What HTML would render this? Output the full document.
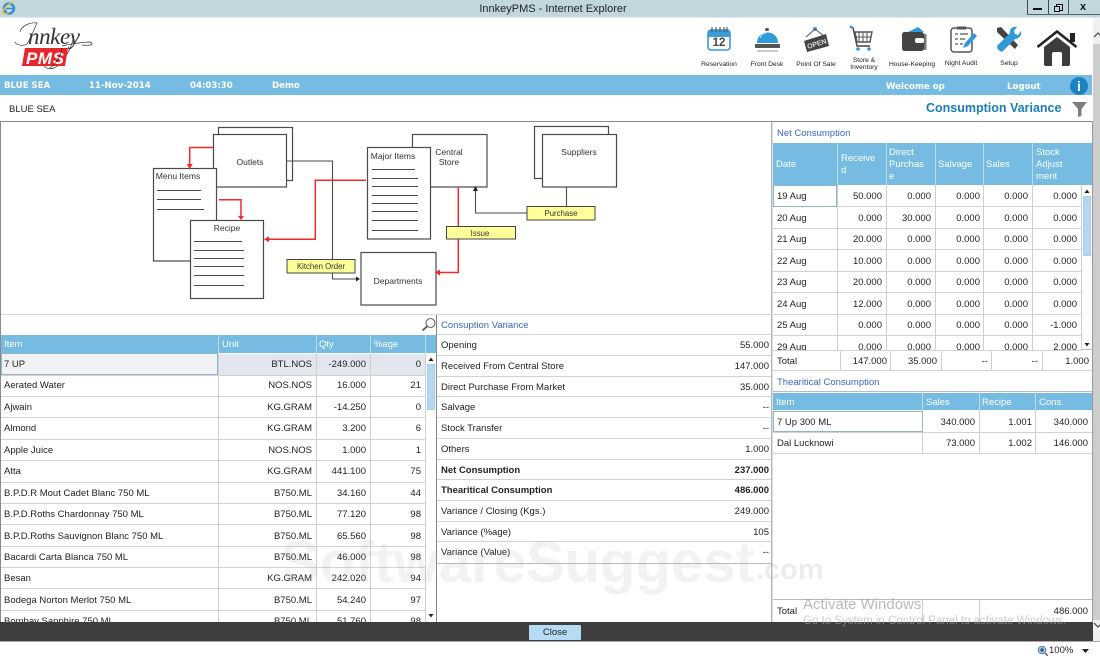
<!DOCTYPE html>
<html><head><meta charset="utf-8"><title>InnkeyPMS</title>
<style>
html,body{margin:0;padding:0;background:#fff}
#p{position:relative;width:1100px;height:659px;overflow:hidden;background:#fff;font-family:"Liberation Sans",sans-serif;font-size:9.5px;color:#222}
#p div{position:absolute;box-sizing:border-box;white-space:nowrap}
.l{height:1px;background:#d2d2d2}
.v{width:1px;background:#cfcfcf}
.h{color:#fff;line-height:18px;margin-top:1px}
.t{line-height:14px;height:14px;margin-top:1px}
.a{text-align:right}
.bl{color:#3a67c0}
.bb{font-family:"DejaVu Sans",sans-serif;font-weight:bold;font-size:8.6px;color:#fff;line-height:12px}
.ic{font-size:6.7px;color:#222;text-align:center;line-height:7px}
</style></head><body><div id="p">

<!-- title bar -->
<div style="left:0;top:0;width:1100px;height:17px;background:#c2d6de"></div>
<div style="left:0;top:17px;width:1100px;height:1px;background:#dfe9ed"></div>
<svg style="position:absolute;left:1px;top:1px" width="15" height="15" viewBox="0 0 15 15"><ellipse cx="8" cy="7.500" rx="5" ry="5" fill="none" stroke="#2d8fd8" stroke-width="2.400"/><path d="M5 7.500h7" stroke="#2d8fd8" stroke-width="1.500"/><path d="M13 1.500C9 1 2 7 1.500 12c0 2 4 1 7-1" fill="none" stroke="#f2c230" stroke-width="1.300"/></svg>
<div style="left:400px;top:2px;width:306px;text-align:center;font-size:11px;line-height:14px;color:#222">InnkeyPMS - Internet Explorer</div>
<div style="left:1027px;top:0;width:1px;height:15px;background:#445"></div>
<div style="left:1048px;top:0;width:1px;height:15px;background:#445"></div>
<div style="left:1068px;top:0;width:1px;height:15px;background:#556"></div>
<div style="left:1027px;top:14px;width:73px;height:1px;background:#55656d"></div>
<div style="left:1033px;top:8px;width:9px;height:2px;background:#111"></div>
<div style="left:1056px;top:4px;width:7px;height:7px;border:1.500px solid #111"></div>
<div style="left:1054px;top:6px;width:6px;height:6px;border:1.500px solid #111;background:#c2d6de"></div>
<div style="left:1080px;top:1px;width:14px;font-size:11px;font-weight:bold;line-height:13px;color:#111">x</div>

<!-- logo -->
<svg style="position:absolute;left:12px;top:18px" width="86" height="56" viewBox="0 0 86 56">
<path d="M3 24C5 28 12 28 15 26 20 18 23 9 25 5 18 4 9 8 8 14" fill="none" stroke="#333" stroke-width=".7"/>
<text x="16" y="26" font-family="Liberation Serif" font-style="italic" font-size="23" fill="#333" textLength="52">nnkey</text>
<path d="M62 18C60 28 52 46 42 50 34 52 30 48 34 45" fill="none" stroke="#333" stroke-width=".7"/>
<path d="M50 28C58 26 72 24 78 24 82 26 80 28 70 27" fill="none" stroke="#333" stroke-width=".7"/>
<path d="M13 30L10 48H53L56 30Z" fill="#e6262c"/>
<text x="14" y="46" font-family="Liberation Sans" font-weight="bold" font-style="italic" font-size="17" fill="#fff" textLength="38">PMS</text>
<path d="M50 30C49 38 44 46 38 50" fill="none" stroke="#222" stroke-width=".6"/>
</svg>

<!-- top icons -->
<svg style="position:absolute;left:700px;top:22px" width="380" height="46" viewBox="700 22 380 46">
<!-- calendar -->
<rect x="708" y="30" width="22" height="20" rx="3" fill="#fff" stroke="#3b9bd7" stroke-width="1.600"/>
<path d="M708 33q0-3 3-3h16q3 0 3 3v4h-22z" fill="#3b9bd7"/>
<path d="M712 27v5M716 27v5M720 27v5M724 27v5M727 27v5" stroke="#444" stroke-width="1"/>
<text x="719" y="46" text-anchor="middle" font-family="Liberation Sans" font-weight="bold" font-size="11.500" fill="#444">12</text>
<!-- bell -->
<path d="M757 43c0-14 21-14 21 0z" fill="#2f9ada"/>
<rect x="755" y="44" width="25" height="4" fill="#555"/>
<rect x="765" y="28" width="4" height="3" rx="1.500" fill="#555"/>
<path d="M760 38c1-3 3-5 6-5" stroke="#bfe2f6" fill="none"/>
<path d="M757 51h21" stroke="#ccc" stroke-width="2"/>
<!-- open -->
<circle cx="815" cy="29" r="2" fill="#3b9bd7"/>
<path d="M815 29l-9 8M815 29l9 7" stroke="#555" fill="none"/>
<path d="M804 41l22-7 3 12-22 6z" fill="#444"/>
<text transform="translate(808 49) rotate(-17)" font-family="Liberation Sans" font-weight="bold" font-size="7" fill="#ddd">OPEN</text>
<!-- cart -->
<path d="M850 27l3 1 4 18h13" stroke="#444" stroke-width="1.400" fill="none"/>
<path d="M855 32h17l-2 10h-13z" fill="#fff" stroke="#555" stroke-width="1.400"/>
<path d="M859 32v10M863 32v10M867 32v10M856 37h15" stroke="#555"/>
<circle cx="858" cy="49" r="1.800" fill="#2f9ada"/><circle cx="869" cy="49" r="1.800" fill="#2f9ada"/>
<path d="M850 26l3 2" stroke="#2f9ada" stroke-width="2"/>
<!-- wallet -->
<path d="M908 32l10-5 6 5z" fill="#2f9ada"/>
<rect x="902" y="32" width="22" height="19" rx="2.500" fill="#444"/>
<path d="M924 34h1.500q1 0 1 1v14q0 1-1 1h-1.500z" fill="#777"/>
<rect x="915" y="38" width="9" height="5" rx="2" fill="#fff"/>
<!-- audit -->
<rect x="951" y="28" width="21" height="24" rx="3" fill="#fff" stroke="#555" stroke-width="1.500"/>
<rect x="957" y="26.500" width="9" height="3" fill="#555"/>
<path d="M955 34h3M955 39h3M955 44h3M960 34h8M960 39h5M960 44h3" stroke="#555" stroke-width="1.300"/>
<path d="M963 48l2-5 9-10 3 3-9 10z" fill="#2f9ada"/>
<!-- setup -->
<path d="M997 28l4-1 17 18-3 4-18-17z" fill="#444"/>
<path d="M999 50c-3-2-2-5 0-6l11-11c-1-4 3-7 7-6l-3 4 1 3 3 1 3-4c1 4-2 8-6 8l-12 12c-1 1-3 1-4-1z" fill="#2f9ada"/>
<!-- home -->
<path d="M1037.500 47L1057 31.500 1076.500 47" fill="none" stroke="#222" stroke-width="2.500"/>
<rect x="1070" y="33" width="5" height="9" fill="#222"/>
<path d="M1044 47l13-10 13 10v17q0 2-2 2h-6v-12q0-2-2-2h-6q-2 0-2 2v12h-6q-2 0-2-2z" fill="#3c3c3c"/>
</svg>
<div class="ic" style="left:690px;top:61px;width:58px">Reservation</div>
<div class="ic" style="left:738px;top:61px;width:58px">Front Desk</div>
<div class="ic" style="left:787px;top:61px;width:58px">Point Of Sale</div>
<div class="ic" style="left:835px;top:57px;width:58px">Store &amp;<br>Inventory</div>
<div class="ic" style="left:883px;top:61px;width:58px">House-Keeping</div>
<div class="ic" style="left:932px;top:60px;width:58px">Night Audit</div>
<div class="ic" style="left:980px;top:60px;width:58px">Setup</div>

<!-- blue bar -->
<div style="left:0;top:75px;width:1092px;height:20px;background:#75bbe2"></div>
<div class="bb" style="left:4px;top:80px">BLUE SEA</div>
<div class="bb" style="left:89px;top:80px">11-Nov-2014</div>
<div class="bb" style="left:190px;top:80px">04:03:30</div>
<div class="bb" style="left:272px;top:80px">Demo</div>
<div class="bb" style="left:886px;top:81px">Welcome op</div>
<div class="bb" style="left:1007px;top:81px">Logout</div>
<div style="left:1070px;top:77px;width:18px;height:18px;border-radius:9px;background:#1b84c0;color:#fff;text-align:center;font:bold 14px/18px 'Liberation Sans',sans-serif">i</div>

<div style="left:9px;top:104px;font-size:9.500px;line-height:12px;color:#222">BLUE SEA</div>
<div style="left:926px;top:100px;font-size:12.500px;font-weight:bold;line-height:16px;color:#1a7db5">Consumption Variance</div>
<svg style="position:absolute;left:1072px;top:102px" width="16" height="15"><path d="M0 0H15L9.500 7V14L6 15V7Z" fill="#7d7d7d"/></svg>

<!-- right scrollbar -->
<div style="left:1093px;top:18px;width:7px;height:623px;background:#f0f0f0"></div>
<div style="left:1093px;top:44px;width:7px;height:576px;background:#cdcdcd"></div>
<svg style="position:absolute;left:1093px;top:30px" width="7" height="10"><path d="M1 7L5 3 7 5" fill="none" stroke="#555" stroke-width="1.300"/></svg>
<svg style="position:absolute;left:1093px;top:621px" width="7" height="10"><path d="M1 2L5 6 7 4" fill="none" stroke="#555" stroke-width="1.300"/></svg>

<!-- panel frame -->
<div style="left:0;top:121px;width:1092px;height:1px;background:#8a8a8a"></div>
<div style="left:0;top:121px;width:1px;height:501px;background:#8a8a8a"></div>
<div style="left:1092px;top:121px;width:1px;height:501px;background:#999"></div>
<div style="left:771px;top:122px;width:1px;height:500px;background:#b5b5b5"></div>
<div style="left:772px;top:122px;width:1px;height:500px;background:#ddd"></div>

<!-- diagram -->
<svg style="position:absolute;left:0;top:0" width="780" height="320" viewBox="0 0 780 320">
<g fill="#fff" stroke="#4a4a4a" stroke-width="1.200">
<rect x="218.500" y="127.500" width="74" height="53"/>
<rect x="213.500" y="134.500" width="73" height="52.500"/>
<rect x="153.500" y="168.500" width="63" height="92.500"/>
<rect x="190.500" y="220.500" width="73" height="78"/>
<rect x="412.500" y="134.500" width="74.500" height="52.500"/>
<rect x="367.500" y="147.500" width="63" height="91.500"/>
<rect x="534.500" y="126.500" width="74" height="52"/>
<rect x="542.500" y="134.500" width="74" height="52.500"/>
<rect x="361" y="252.500" width="75" height="52.500"/>
</g>
<g fill="none" stroke="#4a4a4a" stroke-width="1.100">
<path d="M287 161H332.500V279H356"/>
<path d="M566.500 187V206"/>
<path d="M527 213H475.500V191"/>
<path d="M157 190.500H201M157 199.500H201M157 209.500H204"/>
<path d="M194 241.500H242M194 250.500H244M194 258.500H244M194 266.500H244M194 275.500H244M194 285.500H244"/>
<path d="M372 169.500H415M372 178.500H418M372 186.500H418M372 195.500H418M372 203.500H418M372 211.500H418M372 220.500H418M372 230.500H418"/>
</g>
<g fill="none" stroke="#ee2a2a" stroke-width="1.500">
<path d="M213 147.500H189.700V164"/>
<path d="M219 199.700H241V216"/>
<path d="M366 180.300H315.300V239.300H268"/>
<path d="M458.300 187V272.500H440"/>
</g>
<path d="M186.700 164h6l-3 5zM238 216h6l-3 4zM269 236.300v6l-5-3zM440 269.500v6l-5-3z" fill="#ee2a2a"/>
<path d="M356 276.500v5l4-2.500zM473 191h5l-2.500-5z" fill="#222"/>
<g fill="#ffff99" stroke="#444" stroke-width="1">
<rect x="287" y="259.500" width="68" height="13.500"/>
<rect x="446.500" y="226.500" width="69" height="12.500"/>
<rect x="527" y="206.500" width="68" height="13.500"/>
</g>
<g font-family="Liberation Sans" font-size="8.500" fill="#333" text-anchor="middle">
<text x="250" y="165">Outlets</text>
<text x="178" y="179">Menu Items</text>
<text x="227" y="231">Recipe</text>
<text x="393" y="159">Major Items</text>
<text x="449" y="155">Central</text>
<text x="449" y="165">Store</text>
<text x="579" y="155">Suppliers</text>
<text x="398" y="284">Departments</text>
<text x="321" y="269" font-size="7.800">Kitchen Order</text>
<text x="480" y="236" font-size="7.800">Issue</text>
<text x="561" y="216" font-size="7.800">Purchase</text>
</g>
</svg>

<!-- search row -->
<div style="left:1px;top:314px;width:771px;height:1px;background:#d5d5d5"></div>
<svg style="position:absolute;left:421px;top:317px" width="16" height="15"><circle cx="9.500" cy="6" r="4.500" fill="none" stroke="#666" stroke-width="1.100"/><path d="M6 9.500L1.500 13.500" stroke="#555" stroke-width="1.800"/></svg>

<!-- left table -->
<div style="left:1px;top:335px;width:436px;height:18px;background:#75bbe2"></div>
<div class="h" style="left:4px;top:335px">Item</div>
<div class="h" style="left:222px;top:335px">Unit</div>
<div class="h" style="left:319px;top:335px">Qty</div>
<div class="h" style="left:374px;top:335px">%age</div>
<div style="left:218px;top:335px;width:1px;height:18px;background:#bcdcf0"></div>
<div style="left:316px;top:335px;width:1px;height:18px;background:#bcdcf0"></div>
<div style="left:370px;top:335px;width:1px;height:18px;background:#bcdcf0"></div>
<div style="left:425px;top:335px;width:1px;height:18px;background:#bcdcf0"></div>

<div style="left:219px;top:354px;width:207px;height:21px;background:#e1e6ef"></div>
<div style="left:1px;top:353px;width:217px;height:22px;background:#f1f2f3;border:1px solid #8db6c9"></div>

<div class="v" style="left:218px;top:353px;height:269px"></div>
<div class="v" style="left:316px;top:353px;height:269px"></div>
<div class="v" style="left:370px;top:353px;height:269px"></div>
<div class="v" style="left:425px;top:353px;height:269px"></div>
<div class="v" style="left:436px;top:315px;height:307px;background:#888"></div>

<div class="l" style="left:1px;top:375px;width:425px"></div><div class="l" style="left:1px;top:396px;width:425px"></div><div class="l" style="left:1px;top:417px;width:425px"></div><div class="l" style="left:1px;top:439px;width:425px"></div><div class="l" style="left:1px;top:460px;width:425px"></div><div class="l" style="left:1px;top:482px;width:425px"></div><div class="l" style="left:1px;top:503px;width:425px"></div><div class="l" style="left:1px;top:524px;width:425px"></div><div class="l" style="left:1px;top:546px;width:425px"></div><div class="l" style="left:1px;top:567px;width:425px"></div><div class="l" style="left:1px;top:588px;width:425px"></div><div class="l" style="left:1px;top:610px;width:425px"></div>

<div class="t" style="left:4px;top:357px">7 UP</div><div class="t a" style="left:219px;width:93px;top:357px">BTL.NOS</div><div class="t a" style="left:317px;width:49px;top:357px">-249.000</div><div class="t a" style="left:371px;width:50px;top:357px">0</div>
<div class="t" style="left:4px;top:378px">Aerated Water</div><div class="t a" style="left:219px;width:93px;top:378px">NOS.NOS</div><div class="t a" style="left:317px;width:49px;top:378px">16.000</div><div class="t a" style="left:371px;width:50px;top:378px">21</div>
<div class="t" style="left:4px;top:400px">Ajwain</div><div class="t a" style="left:219px;width:93px;top:400px">KG.GRAM</div><div class="t a" style="left:317px;width:49px;top:400px">-14.250</div><div class="t a" style="left:371px;width:50px;top:400px">0</div>
<div class="t" style="left:4px;top:421px">Almond</div><div class="t a" style="left:219px;width:93px;top:421px">KG.GRAM</div><div class="t a" style="left:317px;width:49px;top:421px">3.200</div><div class="t a" style="left:371px;width:50px;top:421px">6</div>
<div class="t" style="left:4px;top:443px">Apple Juice</div><div class="t a" style="left:219px;width:93px;top:443px">NOS.NOS</div><div class="t a" style="left:317px;width:49px;top:443px">1.000</div><div class="t a" style="left:371px;width:50px;top:443px">1</div>
<div class="t" style="left:4px;top:464px">Atta</div><div class="t a" style="left:219px;width:93px;top:464px">KG.GRAM</div><div class="t a" style="left:317px;width:49px;top:464px">441.100</div><div class="t a" style="left:371px;width:50px;top:464px">75</div>
<div class="t" style="left:4px;top:486px">B.P.D.R Mout Cadet Blanc 750 ML</div><div class="t a" style="left:219px;width:93px;top:486px">B750.ML</div><div class="t a" style="left:317px;width:49px;top:486px">34.160</div><div class="t a" style="left:371px;width:50px;top:486px">44</div>
<div class="t" style="left:4px;top:507px">B.P.D.Roths Chardonnay 750 ML</div><div class="t a" style="left:219px;width:93px;top:507px">B750.ML</div><div class="t a" style="left:317px;width:49px;top:507px">77.120</div><div class="t a" style="left:371px;width:50px;top:507px">98</div>
<div class="t" style="left:4px;top:529px">B.P.D.Roths Sauvignon Blanc 750 ML</div><div class="t a" style="left:219px;width:93px;top:529px">B750.ML</div><div class="t a" style="left:317px;width:49px;top:529px">65.560</div><div class="t a" style="left:371px;width:50px;top:529px">98</div>
<div class="t" style="left:4px;top:550px">Bacardi Carta Blanca 750 ML</div><div class="t a" style="left:219px;width:93px;top:550px">B750.ML</div><div class="t a" style="left:317px;width:49px;top:550px">46.000</div><div class="t a" style="left:371px;width:50px;top:550px">98</div>
<div class="t" style="left:4px;top:571px">Besan</div><div class="t a" style="left:219px;width:93px;top:571px">KG.GRAM</div><div class="t a" style="left:317px;width:49px;top:571px">242.020</div><div class="t a" style="left:371px;width:50px;top:571px">94</div>
<div class="t" style="left:4px;top:593px">Bodega Norton Merlot 750 ML</div><div class="t a" style="left:219px;width:93px;top:593px">B750.ML</div><div class="t a" style="left:317px;width:49px;top:593px">54.240</div><div class="t a" style="left:371px;width:50px;top:593px">97</div>
<div class="t" style="left:4px;top:614px">Bombay Sapphire 750 ML</div><div class="t a" style="left:219px;width:93px;top:614px">B750.ML</div><div class="t a" style="left:317px;width:49px;top:614px">51.760</div><div class="t a" style="left:371px;width:50px;top:614px">98</div>

<!-- left scrollbar -->
<div style="left:426px;top:353px;width:10px;height:269px;background:#fff"></div>
<div style="left:427px;top:364px;width:8px;height:46px;background:#b4d8ef;border:1px solid #a5cfe9"></div>
<svg style="position:absolute;left:426px;top:355px" width="10" height="267"><path d="M2.500 6L5 2.500 7.500 6zM2.500 259L5 262.500 7.500 259z" fill="#222"/></svg>

<!-- middle panel -->
<div class="t bl" style="left:441px;top:318px">Consuption Variance</div>
<div class="l" style="left:437px;top:334px;width:334px"></div><div class="l" style="left:437px;top:355px;width:334px"></div><div class="l" style="left:437px;top:376px;width:334px"></div><div class="l" style="left:437px;top:396px;width:334px"></div><div class="l" style="left:437px;top:417px;width:334px"></div><div class="l" style="left:437px;top:438px;width:334px"></div><div class="l" style="left:437px;top:459px;width:334px"></div><div class="l" style="left:437px;top:479px;width:334px"></div><div class="l" style="left:437px;top:500px;width:334px"></div><div class="l" style="left:437px;top:521px;width:334px"></div><div class="l" style="left:437px;top:541px;width:334px"></div><div class="l" style="left:437px;top:563px;width:334px;background:#bbb"></div>

<div class="t" style="left:441px;top:338px">Opening</div><div class="t a" style="left:640px;width:129px;top:338px">55.000</div>
<div class="t" style="left:441px;top:359px">Received From Central Store</div><div class="t a" style="left:640px;width:129px;top:359px">147.000</div>
<div class="t" style="left:441px;top:380px">Direct Purchase From Market</div><div class="t a" style="left:640px;width:129px;top:380px">35.000</div>
<div class="t" style="left:441px;top:400px">Salvage</div><div class="t a" style="left:640px;width:129px;top:400px">--</div>
<div class="t" style="left:441px;top:421px">Stock Transfer</div><div class="t a" style="left:640px;width:129px;top:421px">--</div>
<div class="t" style="left:441px;top:442px">Others</div><div class="t a" style="left:640px;width:129px;top:442px">1.000</div>
<div class="t" style="left:441px;top:463px;font-weight:bold">Net Consumption</div><div class="t a" style="left:640px;width:129px;top:463px;font-weight:bold">237.000</div>
<div class="t" style="left:441px;top:483px;font-weight:bold">Thearitical Consumption</div><div class="t a" style="left:640px;width:129px;top:483px;font-weight:bold">486.000</div>
<div class="t" style="left:441px;top:504px">Variance / Closing (Kgs.)</div><div class="t a" style="left:640px;width:129px;top:504px">249.000</div>
<div class="t" style="left:441px;top:525px">Variance (%age)</div><div class="t a" style="left:640px;width:129px;top:525px">105</div>
<div class="t" style="left:441px;top:545px">Variance (Value)</div><div class="t a" style="left:640px;width:129px;top:545px">--</div>

<!-- net consumption -->
<div class="t bl" style="left:777px;top:126px">Net Consumption</div>
<div style="left:773px;top:143px;width:319px;height:42px;background:#75bbe2"></div>
<div style="left:837px;top:143px;width:1px;height:42px;background:#bcdcf0"></div><div style="left:886px;top:143px;width:1px;height:42px;background:#bcdcf0"></div><div style="left:935px;top:143px;width:1px;height:42px;background:#bcdcf0"></div><div style="left:983px;top:143px;width:1px;height:42px;background:#bcdcf0"></div><div style="left:1032px;top:143px;width:1px;height:42px;background:#bcdcf0"></div>
<div class="h" style="left:776px;top:155px">Date</div>
<div class="h" style="left:841px;top:152px;line-height:12px">Receive<br>d</div>
<div class="h" style="left:889px;top:146px;line-height:12px">Direct<br>Purchas<br>e</div>
<div class="h" style="left:938px;top:155px">Salvage</div>
<div class="h" style="left:986px;top:155px">Sales</div>
<div class="h" style="left:1036px;top:146px;line-height:12px">Stock<br>Adjust<br>ment</div>

<div class="l" style="left:773px;top:206px;width:309px"></div><div class="l" style="left:773px;top:228px;width:309px"></div><div class="l" style="left:773px;top:249px;width:309px"></div><div class="l" style="left:773px;top:271px;width:309px"></div><div class="l" style="left:773px;top:292px;width:309px"></div><div class="l" style="left:773px;top:314px;width:309px"></div><div class="l" style="left:773px;top:335px;width:309px"></div>
<div class="v" style="left:837px;top:185px;height:165px"></div><div class="v" style="left:886px;top:185px;height:165px"></div><div class="v" style="left:935px;top:185px;height:165px"></div><div class="v" style="left:983px;top:185px;height:165px"></div><div class="v" style="left:1032px;top:185px;height:165px"></div><div class="v" style="left:1081px;top:185px;height:165px"></div>
<div style="left:773px;top:185px;width:64px;height:22px;border:1px solid #8db6c9"></div>

<div class="t" style="left:777px;top:189px">19 Aug</div><div class="t a" style="left:838px;width:44px;top:189px">50.000</div><div class="t a" style="left:887px;width:44px;top:189px">0.000</div><div class="t a" style="left:936px;width:44px;top:189px">0.000</div><div class="t a" style="left:984px;width:44px;top:189px">0.000</div><div class="t a" style="left:1033px;width:44px;top:189px">0.000</div>
<div class="t" style="left:777px;top:211px">20 Aug</div><div class="t a" style="left:838px;width:44px;top:211px">0.000</div><div class="t a" style="left:887px;width:44px;top:211px">30.000</div><div class="t a" style="left:936px;width:44px;top:211px">0.000</div><div class="t a" style="left:984px;width:44px;top:211px">0.000</div><div class="t a" style="left:1033px;width:44px;top:211px">0.000</div>
<div class="t" style="left:777px;top:232px">21 Aug</div><div class="t a" style="left:838px;width:44px;top:232px">20.000</div><div class="t a" style="left:887px;width:44px;top:232px">0.000</div><div class="t a" style="left:936px;width:44px;top:232px">0.000</div><div class="t a" style="left:984px;width:44px;top:232px">0.000</div><div class="t a" style="left:1033px;width:44px;top:232px">0.000</div>
<div class="t" style="left:777px;top:254px">22 Aug</div><div class="t a" style="left:838px;width:44px;top:254px">10.000</div><div class="t a" style="left:887px;width:44px;top:254px">0.000</div><div class="t a" style="left:936px;width:44px;top:254px">0.000</div><div class="t a" style="left:984px;width:44px;top:254px">0.000</div><div class="t a" style="left:1033px;width:44px;top:254px">0.000</div>
<div class="t" style="left:777px;top:275px">23 Aug</div><div class="t a" style="left:838px;width:44px;top:275px">20.000</div><div class="t a" style="left:887px;width:44px;top:275px">0.000</div><div class="t a" style="left:936px;width:44px;top:275px">0.000</div><div class="t a" style="left:984px;width:44px;top:275px">0.000</div><div class="t a" style="left:1033px;width:44px;top:275px">0.000</div>
<div class="t" style="left:777px;top:297px">24 Aug</div><div class="t a" style="left:838px;width:44px;top:297px">12.000</div><div class="t a" style="left:887px;width:44px;top:297px">0.000</div><div class="t a" style="left:936px;width:44px;top:297px">0.000</div><div class="t a" style="left:984px;width:44px;top:297px">0.000</div><div class="t a" style="left:1033px;width:44px;top:297px">0.000</div>
<div class="t" style="left:777px;top:318px">25 Aug</div><div class="t a" style="left:838px;width:44px;top:318px">0.000</div><div class="t a" style="left:887px;width:44px;top:318px">0.000</div><div class="t a" style="left:936px;width:44px;top:318px">0.000</div><div class="t a" style="left:984px;width:44px;top:318px">0.000</div><div class="t a" style="left:1033px;width:44px;top:318px">-1.000</div>
<div class="t" style="left:777px;top:340px;height:9px;overflow:hidden">29 Aug</div><div class="t a" style="left:838px;width:44px;top:340px;height:9px;overflow:hidden">0.000</div><div class="t a" style="left:887px;width:44px;top:340px;height:9px;overflow:hidden">0.000</div><div class="t a" style="left:936px;width:44px;top:340px;height:9px;overflow:hidden">0.000</div><div class="t a" style="left:984px;width:44px;top:340px;height:9px;overflow:hidden">0.000</div><div class="t a" style="left:1033px;width:44px;top:340px;height:9px;overflow:hidden">2.000</div>

<div style="left:1082px;top:185px;width:10px;height:165px;background:#fff;border-bottom:1px solid #bbb"></div>
<div style="left:1083px;top:196px;width:8px;height:60px;background:#b4d8ef;border:1px solid #a5cfe9"></div>
<svg style="position:absolute;left:1082px;top:186px" width="10" height="164"><path d="M2.500 7L5 3.500 7.500 7zM2.500 157L5 160.500 7.500 157z" fill="#222"/></svg>

<!-- net total -->
<div class="l" style="left:773px;top:350px;width:309px"></div>
<div class="v" style="left:840px;top:351px;height:19px"></div><div class="v" style="left:890px;top:351px;height:19px"></div><div class="v" style="left:941px;top:351px;height:19px"></div><div class="v" style="left:991px;top:351px;height:19px"></div><div class="v" style="left:1042px;top:351px;height:19px"></div>
<div class="l" style="left:773px;top:370px;width:319px"></div>
<div class="t" style="left:777px;top:354px">Total</div>
<div class="t a" style="left:841px;width:46px;top:354px">147.000</div>
<div class="t a" style="left:891px;width:46px;top:354px">35.000</div>
<div class="t a" style="left:942px;width:46px;top:354px">--</div>
<div class="t a" style="left:992px;width:46px;top:354px">--</div>
<div class="t a" style="left:1043px;width:46px;top:354px">1.000</div>

<!-- theoretical -->
<div class="t bl" style="left:777px;top:375px">Thearitical Consumption</div>
<div class="l" style="left:773px;top:391px;width:319px;background:#bbb"></div>
<div style="left:773px;top:393px;width:319px;height:17px;background:#75bbe2"></div>
<div style="left:922px;top:393px;width:1px;height:17px;background:#bcdcf0"></div><div style="left:979px;top:393px;width:1px;height:17px;background:#bcdcf0"></div><div style="left:1035px;top:393px;width:1px;height:17px;background:#bcdcf0"></div>
<div class="h" style="left:776px;top:393px;line-height:17px">Item</div>
<div class="h" style="left:926px;top:393px;line-height:17px">Sales</div>
<div class="h" style="left:982px;top:393px;line-height:17px">Recipe</div>
<div class="h" style="left:1039px;top:393px;line-height:17px">Cons.</div>
<div class="v" style="left:922px;top:410px;height:44px"></div><div class="v" style="left:979px;top:410px;height:44px"></div><div class="v" style="left:1035px;top:410px;height:44px"></div>
<div class="l" style="left:773px;top:432px;width:319px"></div><div class="l" style="left:773px;top:453px;width:319px"></div>
<div style="left:773px;top:411px;width:150px;height:21px;border:1px solid #8db6c9"></div>
<div class="t" style="left:777px;top:415px">7 Up 300 ML</div><div class="t a" style="left:923px;width:52px;top:415px">340.000</div><div class="t a" style="left:980px;width:52px;top:415px">1.001</div><div class="t a" style="left:1036px;width:52px;top:415px">340.000</div>
<div class="t" style="left:777px;top:436px">Dal Lucknowi</div><div class="t a" style="left:923px;width:52px;top:436px">73.000</div><div class="t a" style="left:980px;width:52px;top:436px">1.002</div><div class="t a" style="left:1036px;width:52px;top:436px">146.000</div>

<div class="l" style="left:773px;top:599px;width:319px;background:#bbb"></div>
<div class="v" style="left:922px;top:600px;height:22px"></div><div class="v" style="left:979px;top:600px;height:22px"></div>
<div class="t" style="left:777px;top:604px">Total</div>
<div class="t a" style="left:1000px;width:88px;top:604px">486.000</div>

<!-- watermark -->
<div style="left:281px;top:529px;font-size:58px;font-weight:bold;line-height:68px;color:rgba(170,170,170,.15)">SoftwareSuggest</div>
<div style="left:756px;top:553px;font-size:29px;font-weight:bold;line-height:34px;color:rgba(170,170,170,.22)">.com</div>

<!-- bottom bar -->
<div style="left:0;top:622px;width:1093px;height:19px;background:#3f3d3e"></div>
<div style="left:0;top:641px;width:1100px;height:1px;background:#aaa"></div>
<div style="left:529px;top:625px;width:52px;height:15px;background:#b5dcf2;border-radius:1px;text-align:center;font-size:9.500px;line-height:15px;color:#222">Close</div>

<!-- activate windows -->
<div style="left:803px;top:596px;font-size:15px;line-height:17px;color:rgba(140,140,140,.6)">Activate Windows</div>
<div style="left:803px;top:614px;font-size:11.500px;line-height:14px;color:rgba(170,170,170,.6)">Go to System in Control Panel to activate Windows.</div>

<!-- status bar -->
<svg style="position:absolute;left:1037px;top:645px" width="11" height="11"><circle cx="5" cy="5" r="3.800" fill="#9ec7ea" stroke="#5b7fa5"/><path d="M3 5h4M5 3v4" stroke="#235"/><path d="M8 8l3 3" stroke="#666" stroke-width="1.500"/></svg>
<div style="left:1049px;top:644px;font-size:9.500px;line-height:13px;color:#222">100%</div>
<svg style="position:absolute;left:1082px;top:649px" width="8" height="5"><path d="M0 0H7L3.500 4Z" fill="#222"/></svg>
</div></body></html>
